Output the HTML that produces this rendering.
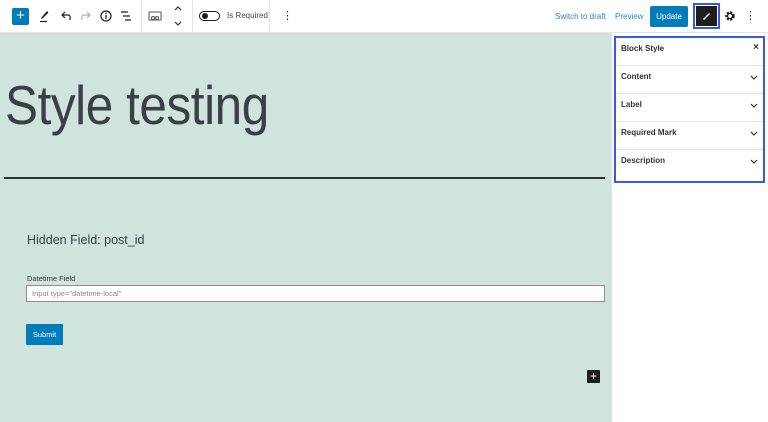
<!DOCTYPE html>
<html><head><meta charset="utf-8"><style>
*{box-sizing:border-box;margin:0;padding:0}
body{width:768px;height:422px;overflow:hidden;background:#fff;font-family:"Liberation Sans",sans-serif;position:relative}
.top{position:absolute;left:0;top:0;width:768px;height:33px;background:#fff;border-bottom:1px solid #e2e4e7}
.ab{position:absolute}
.sep{position:absolute;top:0;width:1px;height:33px;background:#e2e4e7}
.canvas{position:absolute;left:0;top:33px;width:611px;height:389px;background:#d1e3dd}
.side{position:absolute;left:611px;top:33px;width:157px;height:389px;background:#fff;border-left:1px solid #e2e4e7}
.panel{position:absolute;left:614px;top:36px;width:151px;height:147px;border:2px solid #3858e9}
.row{height:28px;border-bottom:1px solid #e2e4e7;font-size:8px;font-weight:bold;color:#333;padding:6px 0 0 5px;position:relative}
.row svg{position:absolute;right:5px;top:9px}
</style></head><body>
<div class="top">
<div class="ab" style="left:12px;top:8px;width:17px;height:17px;background:#007cba;border-radius:2px;color:#fff;font-size:15px;line-height:16px;text-align:center">+</div>
<svg class="ab" style="left:38px;top:9px" width="12" height="14" viewBox="0 0 12 14"><path d="M3 9 L9 2 L10.5 3.5 L4 10 Z" fill="#1e1e1e"/><path d="M2 12.5h7" stroke="#1e1e1e" stroke-width="1.2"/></svg>
<svg class="ab" style="left:60px;top:10px" width="12" height="12" viewBox="0 0 12 12"><path d="M10 10 V7 Q10 5 8 5 H2 M5 2 L2 5 L5 8" fill="none" stroke="#1e1e1e" stroke-width="1.2"/></svg>
<svg class="ab" style="left:80px;top:10px" width="12" height="12" viewBox="0 0 12 12"><path d="M2 10 V7 Q2 5 4 5 H10 M7 2 L10 5 L7 8" fill="none" stroke="#b0b0b0" stroke-width="1.2"/></svg>
<svg class="ab" style="left:100px;top:10px" width="12" height="12" viewBox="0 0 12 12"><circle cx="6" cy="6" r="5" fill="none" stroke="#1e1e1e" stroke-width="1.2"/><path d="M6 5v4" stroke="#1e1e1e" stroke-width="1.3"/><circle cx="6" cy="3.3" r=".8" fill="#1e1e1e"/></svg>
<svg class="ab" style="left:120px;top:11px" width="12" height="10" viewBox="0 0 12 10"><path d="M1 1h7M3 5h7M5 9h6" stroke="#1e1e1e" stroke-width="1.2"/></svg>
<div class="sep" style="left:141px"></div>
<svg class="ab" style="left:148px;top:10px" width="14" height="12" viewBox="0 0 14 12"><rect x="1" y="2" width="12" height="8" fill="none" stroke="#555" stroke-width="1"/><circle cx="5" cy="8" r="1.5" fill="none" stroke="#555"/><circle cx="9" cy="8" r="1.5" fill="none" stroke="#555"/></svg>
<svg class="ab" style="left:173px;top:4px" width="10" height="26" viewBox="0 0 10 26"><path d="M2 6l3-3 3 3M2 18l3 3 3-3" fill="none" stroke="#1e1e1e" stroke-width="1.1"/></svg>
<div class="sep" style="left:192px"></div>
<div class="ab" style="left:199px;top:11px;width:21px;height:10px;border:1px solid #1e1e1e;border-radius:6px"><div style="position:absolute;left:2px;top:1px;width:6px;height:6px;border-radius:50%;background:#1e1e1e"></div></div>
<div class="ab" style="left:227px;top:11px;font-size:8px;color:#444">Is Required</div>
<div class="sep" style="left:269px"></div>
<div class="ab" style="left:282px;top:8px;font-size:11px;color:#1e1e1e;line-height:16px">⋮</div>
<div class="ab" style="left:555px;top:12px;font-size:8px;color:#2c84c4">Switch to draft</div>
<div class="ab" style="left:615px;top:12px;font-size:8px;color:#2c84c4">Preview</div>
<div class="ab" style="left:650px;top:6px;width:38px;height:21px;background:#007cba;color:#fff;font-size:8px;text-align:center;line-height:21px;border-radius:2px">Update</div>
<div class="ab" style="left:693px;top:3px;width:27px;height:26px;border:2px solid #3858e9;padding:1px"><div style="width:100%;height:100%;background:#1e1e1e;position:relative"><svg style="position:absolute;left:5px;top:5px" width="10" height="10" viewBox="0 0 10 10"><path d="M2 8 L8 2 L9 3 L3 9 Z" fill="#fff"/></svg></div></div>
<svg class="ab" style="left:724px;top:10px" width="12" height="12" viewBox="0 0 12 12"><circle cx="6" cy="6" r="3.5" fill="none" stroke="#1e1e1e" stroke-width="2.5" stroke-dasharray="2 1.3"/><circle cx="6" cy="6" r="2.5" fill="none" stroke="#1e1e1e" stroke-width="1.3"/></svg>
<div class="ab" style="left:745px;top:8px;font-size:11px;color:#1e1e1e;line-height:16px">⋮</div>
</div>
<div class="canvas">
<div class="ab" style="left:5px;top:40px;font-size:55px;font-weight:300;color:#3a4048;letter-spacing:-0.5px;transform:scaleX(0.9);transform-origin:0 0;white-space:nowrap">Style testing</div>
<div class="ab" style="left:4px;top:144px;width:601px;height:2px;background:#2c3338"></div>
<div class="ab" style="left:27px;top:200px;font-size:12.5px;color:#3a4048">Hidden Field: post_id</div>
<div class="ab" style="left:27px;top:241px;font-size:7.5px;color:#333">Datetime Field</div>
<div class="ab" style="left:26px;top:252px;width:579px;height:17px;background:#fff;border:1px solid #8c8f94;font-size:7.5px;color:#888;padding:3px 0 0 5px">Input type="datetime-local"</div>
<div class="ab" style="left:26px;top:291px;width:37px;height:21px;background:#007cba;color:#fff;font-size:7.5px;text-align:center;line-height:21px;border-radius:1px">Submit</div>
<div class="ab" style="left:587px;top:337px;width:13px;height:13px;background:#1e1e1e;color:#fff;font-size:12px;line-height:13px;text-align:center;border-radius:1px">+</div>
</div>
<div class="side"></div>
<div class="panel">
<div class="row">Block Style<span style="position:absolute;right:4px;top:4px;font-size:10px">×</span></div>
<div class="row">Content<svg width="8" height="5" viewBox="0 0 8 5"><path d="M1 1l3 3 3-3" fill="none" stroke="#1e1e1e" stroke-width="1.1"/></svg></div>
<div class="row">Label<svg width="8" height="5" viewBox="0 0 8 5"><path d="M1 1l3 3 3-3" fill="none" stroke="#1e1e1e" stroke-width="1.1"/></svg></div>
<div class="row">Required Mark<svg width="8" height="5" viewBox="0 0 8 5"><path d="M1 1l3 3 3-3" fill="none" stroke="#1e1e1e" stroke-width="1.1"/></svg></div>
<div class="row" style="border-bottom:none">Description<svg width="8" height="5" viewBox="0 0 8 5"><path d="M1 1l3 3 3-3" fill="none" stroke="#1e1e1e" stroke-width="1.1"/></svg></div>
</div>
</body></html>
